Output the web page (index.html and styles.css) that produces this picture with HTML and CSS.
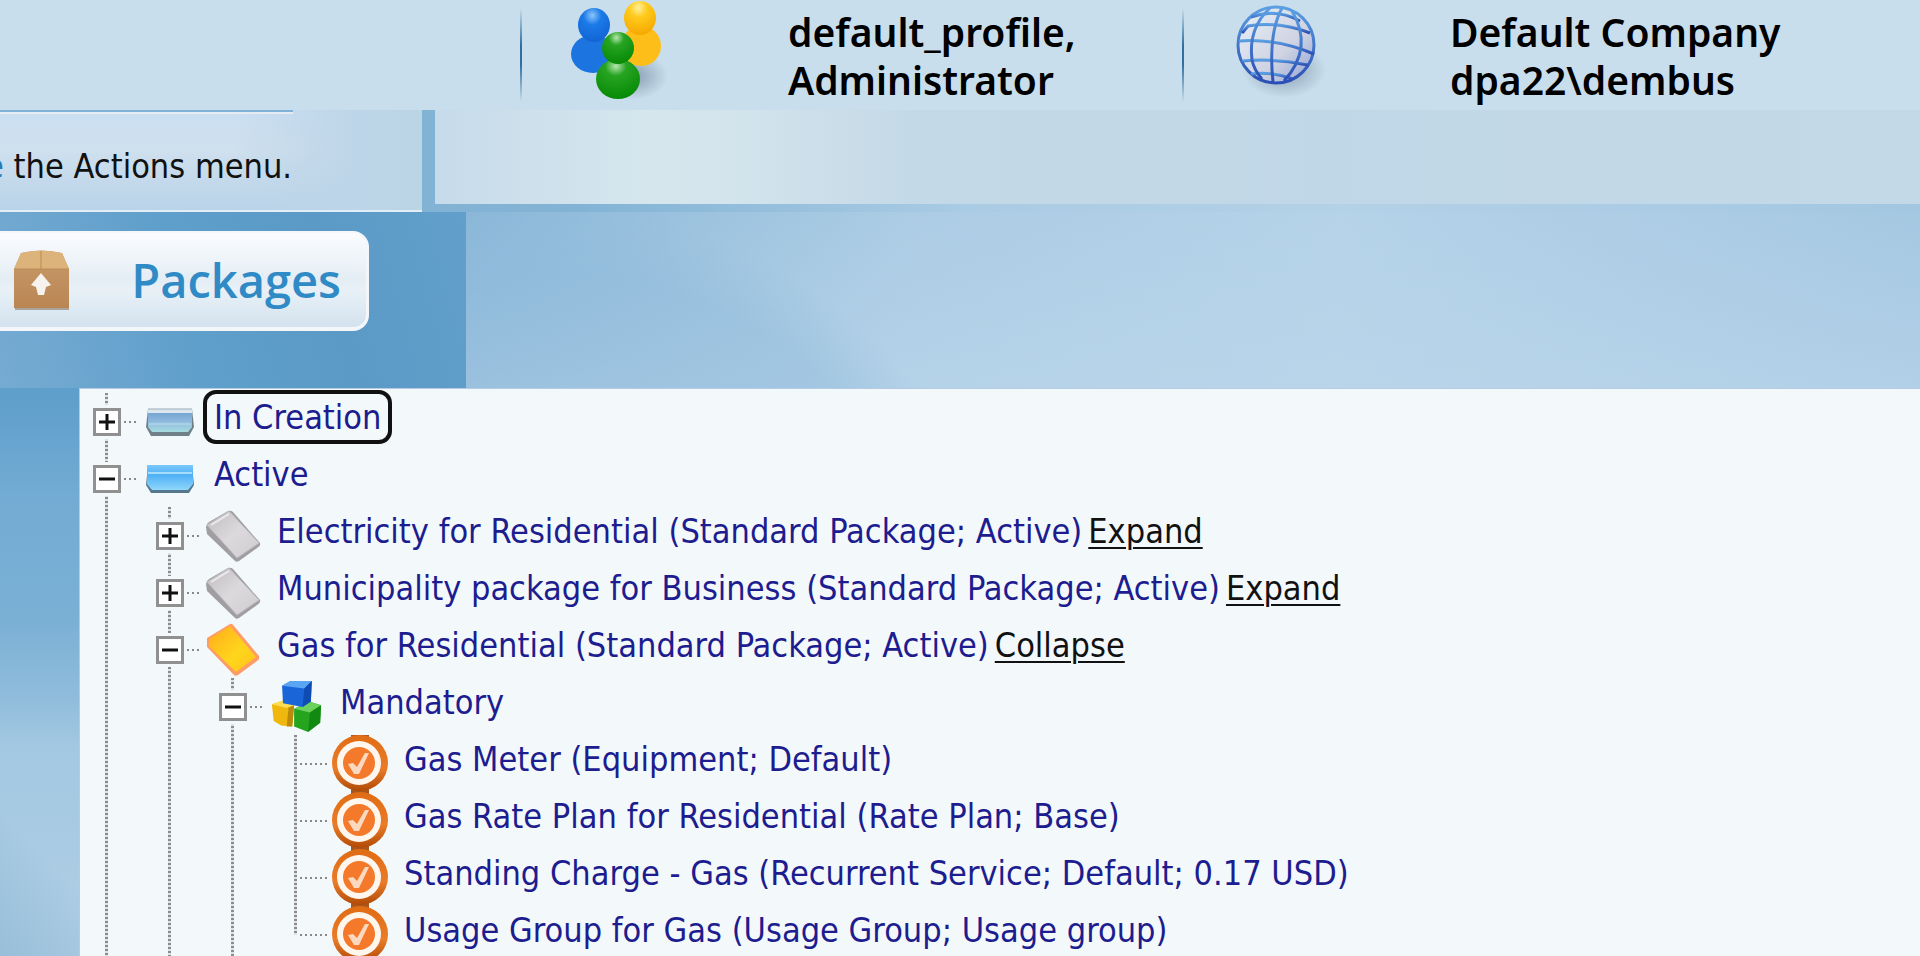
FILE: index.html
```html
<!DOCTYPE html>
<html lang="en">
<head>
    <meta charset="UTF-8">
    <meta name="viewport" content="width=device-width, initial-scale=1.0">
    <title>Packages</title>
    <link rel="stylesheet" href="styles.css">
</head>
<body>

    <!-- shared icons -->
    <svg class="sprite" width="0" height="0" aria-hidden="true">
        <defs>
            <radialGradient id="gBlue" cx="45%" cy="22%" r="80%">
                <stop offset="0" stop-color="#8cc4fb"/>
                <stop offset="0.35" stop-color="#1b7ae8"/>
                <stop offset="1" stop-color="#1263d2"/>
            </radialGradient>
            <radialGradient id="gYellow" cx="45%" cy="20%" r="80%">
                <stop offset="0" stop-color="#fff0a0"/>
                <stop offset="0.35" stop-color="#ffcb1c"/>
                <stop offset="1" stop-color="#f6a800"/>
            </radialGradient>
            <radialGradient id="gGreen" cx="45%" cy="18%" r="80%">
                <stop offset="0" stop-color="#b5e6ae"/>
                <stop offset="0.3" stop-color="#27a422"/>
                <stop offset="1" stop-color="#078b06"/>
            </radialGradient>
            <radialGradient id="gShadow">
                <stop offset="0" stop-color="#4f6580" stop-opacity="0.55"/>
                <stop offset="1" stop-color="#4f6580" stop-opacity="0"/>
            </radialGradient>
            <linearGradient id="gGlobe" x1="0" y1="0" x2="1" y2="1">
                <stop offset="0" stop-color="#eaf1fa"/>
                <stop offset="0.6" stop-color="#cfd3e2"/>
                <stop offset="1" stop-color="#8fa0d4"/>
            </linearGradient>
            <linearGradient id="gGlobeLine" x1="0" y1="0" x2="0" y2="1">
                <stop offset="0" stop-color="#5b9fe2"/>
                <stop offset="1" stop-color="#2b4fb4"/>
            </linearGradient>
            <linearGradient id="gBox" x1="0" y1="0" x2="0" y2="1">
                <stop offset="0" stop-color="#c99a6b"/>
                <stop offset="1" stop-color="#b98653"/>
            </linearGradient>
            <linearGradient id="gTrayDim" x1="0" y1="0" x2="0" y2="1">
                <stop offset="0" stop-color="#6f9fd0"/>
                <stop offset="0.5" stop-color="#8db8dd"/>
                <stop offset="1" stop-color="#a5dbe0"/>
            </linearGradient>
            <linearGradient id="gTray" x1="0" y1="0" x2="0" y2="1">
                <stop offset="0" stop-color="#7cc8fb"/>
                <stop offset="0.4" stop-color="#4fb0f5"/>
                <stop offset="1" stop-color="#8fd6fb"/>
            </linearGradient>
            <linearGradient id="gSilver" x1="0" y1="0" x2="1" y2="1">
                <stop offset="0" stop-color="#bfbdc0"/>
                <stop offset="0.5" stop-color="#dbd9dc"/>
                <stop offset="1" stop-color="#cfcdd0"/>
            </linearGradient>
            <linearGradient id="gGold" x1="0" y1="0" x2="1" y2="1">
                <stop offset="0" stop-color="#ffab1c"/>
                <stop offset="0.6" stop-color="#ffd61c"/>
                <stop offset="1" stop-color="#ffc01a"/>
            </linearGradient>
            <linearGradient id="gRim" x1="0" y1="0" x2="0" y2="1">
                <stop offset="0" stop-color="#e06c14"/>
                <stop offset="0.6" stop-color="#ea7c28"/>
                <stop offset="1" stop-color="#b04a06"/>
            </linearGradient>
        </defs>

        <symbol id="tray-dim" viewBox="0 0 48 28">
            <path d="M0 19 L2 1 H46 L48 19 L43 28 H5 Z" fill="#6f8088"/>
            <path d="M2 19 V2 H46 V19 L42 24 H6 Z" fill="url(#gTrayDim)"/>
            <path d="M2 1 H46 V5 H2 Z" fill="#dce6ee"/>
            <path d="M2 1 H46" stroke="#9aa8b4" stroke-width="1"/>
            <path d="M3 16 H45" stroke="#bfe0ee" stroke-width="1"/>
        </symbol>
        <symbol id="tray" viewBox="0 0 48 28">
            <path d="M0 20 L2 1 H46 L48 20 L43 28 H5 Z" fill="#56788c"/>
            <path d="M1 19 V0 H47 V19 L42 25 H6 Z" fill="url(#gTray)"/>
            <path d="M2 8 H46" stroke="#a5dcfd" stroke-width="2"/>
        </symbol>
        <symbol id="card" viewBox="0 0 56 54">
            <path d="M1 18 Q1 15 4 13 L23 2 Q26 1 28 3 L55 34 Q56 37 52 39 L34 52 Q31 54 29 51 L2 25 Z" fill="#a09ea1"/>
            <path d="M2 16 L24 2 L54 34 L32 49 Z" fill="url(#gSilver)" stroke="#bdbbbe" stroke-width="1"/>
            <path d="M6 16 L24 5" stroke="#ebe9ec" stroke-width="2" fill="none"/>
        </symbol>
        <symbol id="card-gold" viewBox="0 0 56 54">
            <path d="M2 15 L25 1 Q27 0 29 3 L54 33 Q55 36 52 38 L33 52 Q30 54 28 51 L2 24 Z" fill="#ff9c66"/>
            <path d="M4 16 L25 3 L51 34 L31 49 L4 23 Z" fill="url(#gGold)"/>
        </symbol>
        <symbol id="cubes" viewBox="0 0 56 56">
            <path d="M2 25 L14 21 L26 26 L24 49 L12 48 L4 43 Z" fill="#f0b80c"/>
            <path d="M20 28 L26 26 L24 49 L18 49 Z" fill="#b98a0c"/>
            <path d="M2 25 L14 21 L26 26 L18 29 Z" fill="#ffdc54"/>
            <path d="M26 30 L42 22 L55 26 L54 45 L41 55 L26 49 Z" fill="#25a51d"/>
            <path d="M26 30 L42 22 L55 26 L43 34 Z" fill="#6bd05c"/>
            <path d="M43 34 L55 26 L54 45 L41 55 Z" fill="#128a12"/>
            <path d="M13 5 L22 0 H45 L44 22 L35 28 L14 24 Z" fill="#1a66d8"/>
            <path d="M13 5 L22 0 H45 L37 8 Z" fill="#5aa5f4"/>
            <path d="M37 8 L45 0 L44 22 L35 28 Z" fill="#0e4cb4"/>
        </symbol>
        <symbol id="badge" viewBox="0 0 56 57">
            <path d="M19 0 H37 V57 H19 Z" fill="#a8561c"/>
            <circle cx="28" cy="28" r="28" fill="url(#gRim)"/>
            <circle cx="27" cy="28" r="22" fill="#fff6ee"/>
            <circle cx="27" cy="28" r="16" fill="#f4792a"/>
            <path d="M16 29 L21 28 L25 32 L33 18 L37 18 L27 39 L22 39 Z" fill="#fbd9c0"/>
        </symbol>
    </svg>

    <header class="topbar">
        <div class="topbar-item user">
            <svg class="topbar-icon" width="110" height="102" viewBox="0 0 110 102" aria-hidden="true">
                <ellipse cx="72" cy="76" rx="36" ry="24" fill="url(#gShadow)"/>
                <path d="M24 34 H44 V42 H24 Z" fill="#1b74e0"/>
                <ellipse cx="33" cy="54" rx="22" ry="19" fill="#1b74e0"/>
                <ellipse cx="34" cy="25" rx="16" ry="17" fill="url(#gBlue)"/>
                <path d="M69 26 H91 V36 H69 Z" fill="#fdbe1a"/>
                <ellipse cx="81" cy="46" rx="20" ry="20" fill="#fdbe1a"/>
                <ellipse cx="80" cy="18" rx="16" ry="17" fill="url(#gYellow)"/>
                <path d="M48 56 H68 V66 H48 Z" fill="#149a12"/>
                <ellipse cx="58" cy="79" rx="22" ry="20" fill="url(#gGreen)"/>
                <ellipse cx="58" cy="48" rx="16" ry="16" fill="url(#gGreen)"/>
            </svg>
            <div class="topbar-text">default_profile,<br>Administrator</div>
        </div>
        <div class="topbar-item company">
            <svg class="topbar-icon" width="110" height="102" viewBox="0 0 110 102" aria-hidden="true">
                <ellipse cx="62" cy="70" rx="42" ry="28" fill="url(#gShadow)"/>
                <circle cx="54" cy="45" r="38" fill="url(#gGlobe)" stroke="url(#gGlobeLine)" stroke-width="3"/>
                <g transform="translate(6 0)" fill="none" stroke="url(#gGlobeLine)" stroke-width="3">
                    <path d="M23 17 Q48 8 72 21"/>
                    <path d="M14 33 Q16 31 20 26 Q52 21 82 33"/>
                    <path d="M11 41 Q48 38 86 54"/>
                    <path d="M14 61 Q46 58 80 65"/>
                    <path d="M23 74 Q44 71 65 79"/>
                    <path d="M42 8 Q20 28 24 60 Q26 70 34 79"/>
                    <path d="M54 8 Q40 34 45 82"/>
                    <path d="M64 11 Q86 48 56 81"/>
                </g>
            </svg>
            <div class="topbar-text">Default Company<br>dpa22\dembus</div>
        </div>
    </header>

    <div class="banner">
        <div class="notice">
            <p><a href="#">e</a> the Actions menu.</p>
        </div>
        <div class="banner-bar"></div>
    </div>

    <main class="workspace">
        <div class="title-row">
            <div class="title-side">
                <div class="title-tab">
                    <svg width="58" height="62" viewBox="0 0 58 62" aria-hidden="true">
                        <path d="M2 58 H56 V61 H2 Z" fill="#a9a49e"/>
                        <path d="M1 20 L8 4 Q28 -1 49 4 L56 20 V59 H1 Z" fill="url(#gBox)"/>
                        <path d="M1 20 L8 4 Q28 -1 49 4 L56 20 Z" fill="#dbb37b"/>
                        <path d="M1 20 H56 M28 2 V20" stroke="#b98c55" stroke-width="1"/>
                        <path d="M28 24 L38 36 L33 38 L31 46 H25 L23 38 L18 36 Z" fill="#f6f3ef"/>
                    </svg>
                    <h1>Packages</h1>
                </div>
            </div>
            <div class="title-sky"></div>
        </div>

        <div class="tree-panel">
            <ul class="tree">
                <li>
                    <div class="row">
                        <button type="button" class="toggle" aria-label="Open In Creation"><svg width="18" height="18" viewBox="0 0 18 18"><path d="M1 9 H17 M9 1 V17" stroke="#111" stroke-width="3"/></svg></button>
                        <span class="dots"></span>
                        <span class="icon"><svg width="48" height="28"><use href="#tray-dim"/></svg></span>
                        <a class="label selected" href="#">In Creation</a>
                    </div>
                </li>
                <li>
                    <div class="row">
                        <button type="button" class="toggle" aria-label="Close Active"><svg width="18" height="18" viewBox="0 0 18 18"><path d="M1 9 H17" stroke="#111" stroke-width="3"/></svg></button>
                        <span class="dots"></span>
                        <span class="icon"><svg width="48" height="28"><use href="#tray"/></svg></span>
                        <a class="label" href="#">Active</a>
                    </div>
                    <ul>
                        <li>
                            <div class="row">
                                <button type="button" class="toggle" aria-label="Open Electricity for Residential"><svg width="18" height="18" viewBox="0 0 18 18"><path d="M1 9 H17 M9 1 V17" stroke="#111" stroke-width="3"/></svg></button>
                                <span class="dots"></span>
                                <span class="icon"><svg width="56" height="54"><use href="#card"/></svg></span>
                                <a class="label" href="#">Electricity for Residential (Standard Package; Active)</a>
                                <a class="action" href="#">Expand</a>
                            </div>
                        </li>
                        <li>
                            <div class="row">
                                <button type="button" class="toggle" aria-label="Open Municipality package for Business"><svg width="18" height="18" viewBox="0 0 18 18"><path d="M1 9 H17 M9 1 V17" stroke="#111" stroke-width="3"/></svg></button>
                                <span class="dots"></span>
                                <span class="icon"><svg width="56" height="54"><use href="#card"/></svg></span>
                                <a class="label" href="#">Municipality package for Business (Standard Package; Active)</a>
                                <a class="action" href="#">Expand</a>
                            </div>
                        </li>
                        <li>
                            <div class="row">
                                <button type="button" class="toggle" aria-label="Close Gas for Residential"><svg width="18" height="18" viewBox="0 0 18 18"><path d="M1 9 H17" stroke="#111" stroke-width="3"/></svg></button>
                                <span class="dots"></span>
                                <span class="icon"><svg width="56" height="54"><use href="#card-gold"/></svg></span>
                                <a class="label" href="#">Gas for Residential (Standard Package; Active)</a>
                                <a class="action" href="#">Collapse</a>
                            </div>
                            <ul>
                                <li>
                                    <div class="row">
                                        <button type="button" class="toggle" aria-label="Close Mandatory"><svg width="18" height="18" viewBox="0 0 18 18"><path d="M1 9 H17" stroke="#111" stroke-width="3"/></svg></button>
                                        <span class="dots"></span>
                                        <span class="icon"><svg width="52" height="52"><use href="#cubes"/></svg></span>
                                        <a class="label" href="#">Mandatory</a>
                                    </div>
                                    <ul class="leaves">
                                        <li class="row">
                                            <span class="dots"></span>
                                            <span class="icon"><svg width="56" height="57"><use href="#badge"/></svg></span>
                                            <a class="label" href="#">Gas Meter (Equipment; Default)</a>
                                        </li>
                                        <li class="row">
                                            <span class="dots"></span>
                                            <span class="icon"><svg width="56" height="57"><use href="#badge"/></svg></span>
                                            <a class="label" href="#">Gas Rate Plan for Residential (Rate Plan; Base)</a>
                                        </li>
                                        <li class="row">
                                            <span class="dots"></span>
                                            <span class="icon"><svg width="56" height="57"><use href="#badge"/></svg></span>
                                            <a class="label" href="#">Standing Charge - Gas (Recurrent Service; Default; 0.17 USD)</a>
                                        </li>
                                        <li class="row">
                                            <span class="dots"></span>
                                            <span class="icon"><svg width="56" height="57"><use href="#badge"/></svg></span>
                                            <a class="label" href="#">Usage Group for Gas (Usage Group; Usage group)</a>
                                        </li>
                                    </ul>
                                </li>
                            </ul>
                        </li>
                    </ul>
                </li>
            </ul>
        </div>
    </main>

</body>
</html>
```
FILE: styles.css
```css
* {
    box-sizing: border-box;
}

body {
    margin: 0;
    height: 100vh;
    display: flex;
    flex-direction: column;
    overflow: hidden;
    font-family: "DejaVu Sans Condensed", "DejaVu Sans", Tahoma, sans-serif;
    font-size: 34px;
    background-color: #8ab8d9;
}

.sprite {
    position: absolute;
}

/* top bar */
.topbar {
    flex: none;
    display: flex;
    height: 110px;
    padding-left: 520px;
    background-color: #c9deec;
}

.topbar-item {
    display: flex;
    align-items: flex-start;
    padding-left: 40px;
    background: linear-gradient(transparent, #2f6f9f 40%, #2f6f9f 60%, transparent) no-repeat 0 8px / 2px 94px;
}

.user {
    flex: 0 0 662px;
}

.company {
    flex: 1;
}

.topbar-icon {
    flex: none;
    margin-right: 118px;
}

.topbar-text {
    padding-top: 8px;
    font-family: "Noto Sans", "Trebuchet MS", sans-serif;
    font-size: 39px;
    font-weight: 600;
    line-height: 48px;
    color: #000;
    white-space: nowrap;
}

/* notice and banner */
.banner {
    flex: none;
    display: flex;
    align-items: flex-start;
    height: 102px;
    background: linear-gradient(90deg, #82b3d5 30%, #a9cbe3 50%, #b3d1e7 70%, #a3c7e1);
}

.notice {
    flex: 0 0 422px;
    display: flex;
    justify-content: flex-end;
    align-items: center;
    height: 102px;
    padding: 12px 130px 0 0;
    overflow: hidden;
    border-bottom: 2px solid #e3edf6;
    background:
        linear-gradient(#7fb2d5, #7fb2d5) no-repeat 0 0 / 293px 2px,
        linear-gradient(#e4ebf3, #e4ebf3) no-repeat 0 2px / 293px 2px,
        linear-gradient(90deg, transparent 55%, #bdd5e8 85%, #bad5e6),
        linear-gradient(#cbdff2, #cfe0ee 40%, #b9d3e9);
}

.notice p {
    flex: none;
    margin: 0;
    white-space: nowrap;
    color: #111;
}

.notice a {
    color: #2a7ab8;
    text-decoration: none;
}

.banner-bar {
    flex: 1;
    height: 94px;
    margin-left: 13px;
    background: linear-gradient(90deg, #c6dbea, #d5e6ed 14%, #d3e4ec 20%, #c4d9e7 32%, #c0d7e7 60%, #c3d9e8);
}

/* workspace */
.workspace {
    flex: 1;
    min-height: 0;
    display: flex;
    flex-direction: column;
    background:
        linear-gradient(45deg, rgba(80, 140, 185, 0.25), transparent 50%) no-repeat 0 100% / 90px 200px,
        linear-gradient(#5f9fcb 25%, #72abd3 38%, #7bb0d5 55%, #8fbcdb 65%, #a3c8e2 72%, #b0cfe4);
}

.title-row {
    flex: none;
    display: flex;
    height: 176px;
}

.title-side {
    flex: 0 0 466px;
    padding-top: 19px;
    background: linear-gradient(75deg, #76abd2, #5f9fcb 40%, #5b9ac7 70%, #629fcb);
}

.title-tab {
    display: flex;
    align-items: center;
    justify-content: flex-end;
    width: 369px;
    height: 100px;
    padding-right: 25px;
    border: solid #f4f7fa;
    border-width: 2px 3px 4px 0;
    border-radius: 0 16px 16px 0;
    background: linear-gradient(#fbfcfe, #e4edf4 50%, #e9f1f7 60%, #d3e2ee);
}

.title-tab svg {
    flex: none;
    margin-right: 60px;
}

.title-tab h1 {
    margin: 0;
    font-family: "Open Sans", "Trebuchet MS", sans-serif;
    font-size: 47px;
    font-weight: 600;
    line-height: 60px;
    color: #2f8ac6;
}

.title-sky {
    flex: 1;
    background:
        radial-gradient(circle at 95px 443px, rgba(130, 178, 214, 0.3) 380px, transparent 445px),
        linear-gradient(to bottom, transparent, rgba(190, 216, 236, 0.5)),
        linear-gradient(90deg, #8ab7d8, #abcce4 30%, #b5d2e8 60%, #a5c8e2);
}

/* tree */
.tree-panel {
    flex: 1;
    min-height: 0;
    margin-left: 79px;
    padding: 4px 0 0 13px;
    overflow: hidden;
    border: solid #b4cbe4;
    border-width: 1px 0 0 1px;
    background-color: #f3f8fb;
}

.tree,
.tree ul {
    margin: 0;
    padding: 0;
    list-style: none;
    background: repeating-linear-gradient(#8c8c8c 0 2px, #dfe2e4 2px 4px) no-repeat 12px 0 / 3px 100%;
}

.tree ul {
    margin-left: 63px;
}

.tree .leaves {
    background-size: 3px calc(100% - 28px);
}

.row {
    display: flex;
    align-items: center;
    height: 57px;
    white-space: nowrap;
}

.leaves .row {
    padding-left: 15px;
}

.toggle {
    flex: none;
    display: flex;
    align-items: center;
    justify-content: center;
    width: 28px;
    height: 28px;
    padding: 0;
    border: 3px solid #909090;
    background-color: #fff;
    outline: 3px solid #f3f8fb;
    cursor: pointer;
}

.dots {
    flex: none;
    width: 21px;
    height: 2px;
    background: repeating-linear-gradient(90deg, transparent 0 3px, #888 3px 5px) content-box;
    padding-right: 4px;
}

.leaves .dots {
    width: 35px;
}

.icon {
    flex: none;
    display: flex;
    align-items: center;
    justify-content: center;
    width: 56px;
}

.label,
.action {
    margin-bottom: 10px;
    line-height: 32px;
    text-decoration: none;
}

.label {
    margin-left: 16px;
    color: #1d1d8f;
}

.label.selected {
    outline: 4px solid #111;
    outline-offset: 7px;
    border-radius: 2px;
}

.action {
    margin-left: 6px;
    color: #111;
    text-decoration: underline;
    text-decoration-thickness: 2px;
    text-underline-offset: 4px;
}
```
